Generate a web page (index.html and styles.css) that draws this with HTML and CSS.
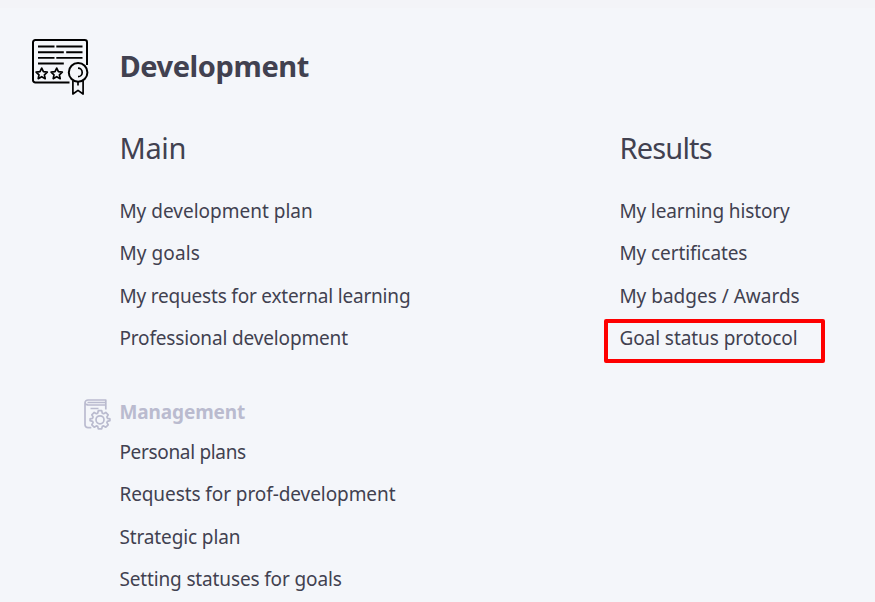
FILE: index.html
```html
<!DOCTYPE html>
<html lang="en">
<head>
<meta charset="utf-8">
<title>Development</title>
<link rel="stylesheet" href="styles.css">
</head>
<body>
<main class="panel">
<svg class="cert" viewBox="0 0 60 60" fill="none" stroke="#000" stroke-width="2" stroke-linejoin="round" stroke-linecap="butt">
<path d="M39.500 45.500H5.300a2.300 2.300 0 0 1-2.300-2.300V5.300A2.300 2.300 0 0 1 5.300 3h49.400a2.300 2.300 0 0 1 2.300 2.300V28"/>
<path stroke-width="1.900" d="M8 9.500h16.500M26.300 9.500h26.200M8 15.300h25.800M36.200 15.300h16.300M8 20.900h16.500M26.300 20.900h26.200M8 26.500h25.800"/>
<path id="star" stroke-width="1.700" d="M11.700 31.100l1.700 3.500 3.900.5-2.900 2.700.8 3.900-3.500-2-3.500 2 .8-3.900-2.900-2.700 3.900-.5z"/>
<use href="#star" x="15"/>
<circle cx="48.100" cy="35.400" r="9.300"/>
<path stroke-width="1.700" d="M48 31.200a4.200 4.200 0 0 1 0 8.400M42.900 43.500v13.500l5.100-3.600 5.100 3.600V43.500M48 44.500v4"/>
</svg>
<div class="content">
<h1>Development</h1>
<div class="columns">
<section>
<h2 class="main-title">Main</h2>
<ul class="links main"><li>My development plan</li><li>My goals</li><li>My requests for external learning</li><li>Professional development</li></ul>
</section>
<section>
<h2 class="results-title">Results</h2>
<ul class="links results"><li>My learning history</li><li>My certificates</li><li>My badges / Awards</li><li class="marked">Goal status protocol</li></ul>
</section>
</div>
<section class="management">
<div class="heading">
<svg class="book" viewBox="0 0 28 32" fill="none" stroke="#babbcf" stroke-width="1.700" stroke-linejoin="round">
<path d="M8.300 29.700H5a3 3 0 0 1-3-3V5a3 3 0 0 1 3-3h17.800v9.500M2.200 6.500A2.500 2.500 0 0 1 4.700 7H22.800M4.500 4.500H22M7.500 10.500h8"/>
<path d="M15.300 12.700h3.400l.6 2.500 1.300.5 2.200-1.300 2.400 2.400-1.300 2.200.5 1.300 2.500.6v1.800l-2.500.6-.5 1.300 1.300 2.200-2.400 2.400-2.200-1.300-1.300.5-.6 2.500h-3.400l-.6-2.500-1.300-.5-2.200 1.300-2.400-2.400 1.300-2.200-.5-1.300-2.500-.6v-1.800l2.500-.6.5-1.300-1.300-2.200 2.400-2.400 2.200 1.300 1.300-.5z"/>
<circle cx="17" cy="21.800" r="4"/>
</svg>
<h3>Management</h3>
</div>
<ul class="links manage"><li>Personal plans</li><li>Requests for prof-development</li><li>Strategic plan</li><li>Setting statuses for goals</li></ul>
</section>
</div>
</main>
</body>
</html>
```

FILE: styles.css
```css
*, *::after { box-sizing: border-box; }
body { margin: 0; height: 602px; overflow: hidden; background: linear-gradient(#f3f4f8 8px, #f4f6fa 8px); color: #414150; font-family: "Noto Sans", sans-serif; }
h1, h2, h3, ul { margin: 0; padding: 0; }
.panel { display: flex; padding-left: 30px; }
.cert { width: 60px; height: 60px; margin: 37px 29px 0 0; flex: none; }
.content { width: 756px; padding-left: 0.4px; }
h1 { margin-top: 45px; font-size: 29px; line-height: 42px; font-weight: 700; letter-spacing: -0.4px; }
.columns { display: grid; grid-template-columns: 500px 255px; margin-top: 40px; }
h2 { font-size: 29px; font-weight: 400; line-height: 42px; margin-bottom: 21px; }
.main-title { letter-spacing: -0.3px; }
.results-title { letter-spacing: -0.8px; }
.links { list-style: none; font-size: 19px; line-height: 42.4px; white-space: nowrap; }
.main li:nth-child(2) { letter-spacing: 0.1px; }
.main li:nth-child(3) { letter-spacing: -0.19px; }
.main li:nth-child(4) { letter-spacing: -0.15px; }
.results li:first-child { letter-spacing: -0.13px; }
.results li:nth-child(2) { letter-spacing: -0.08px; }
.results li:nth-child(4) { letter-spacing: -0.07px; }
.manage li:first-child { letter-spacing: -0.32px; }
.manage li:nth-child(2) { letter-spacing: -0.08px; }
.manage li:nth-child(3) { letter-spacing: -0.12px; }
.manage li:last-child { letter-spacing: -0.14px; }
.marked { position: relative; }
.marked::after { content: ""; position: absolute; left: -15.400px; top: 1.400px; width: 221px; height: 44.600px; border: 4px solid #fe0000; border-radius: 2px; }
.management { margin-top: 35px; }
.heading { display: flex; align-items: center; height: 34px; margin: 0 0 2.200px -36px; }
.book { flex: none; width: 28px; height: 32px; margin: 4px 8px 0 0; }
h3 { color: #babbcf; font-size: 19px; line-height: 32px; letter-spacing: -0.1px; }
```
